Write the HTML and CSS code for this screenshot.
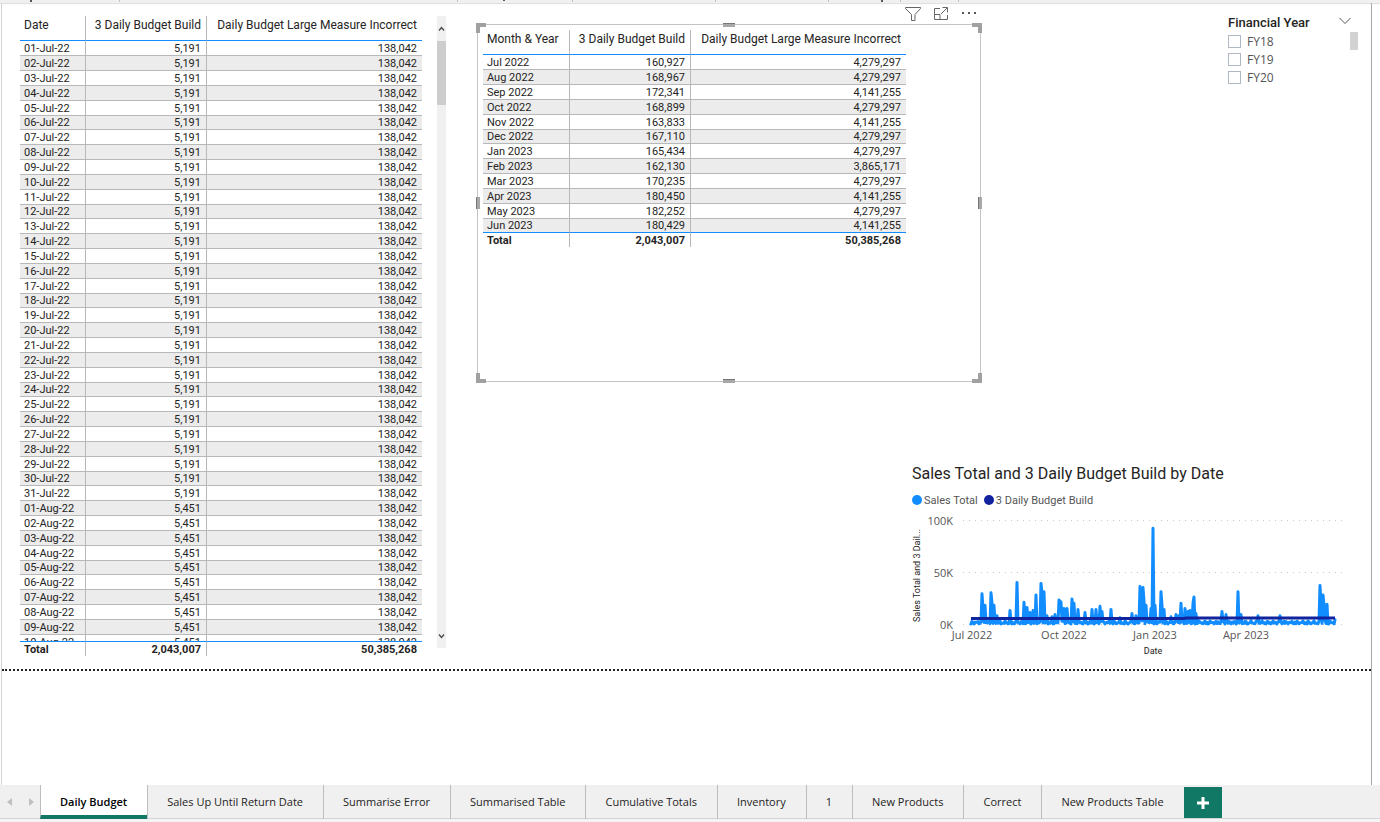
FILE: index.html
```html
<!DOCTYPE html>
<html lang="en">
<head>
	<meta charset="utf-8">
	<title>Daily Budget</title>
	<link rel="stylesheet" href="styles.css">
</head>
<body>
<div class="ribbon">
	<svg viewBox="0 0 1380 3" preserveAspectRatio="none">
		<path d="M119.5 0v2M457.5 0v2M572.5 0v2M715.5 0v2M828.5 0v2M900.5 0v2M958.5 0v2" stroke="#c4c4c4"/>
		<path d="M31 0v2M504 0v1M882 0v2" stroke="#555" stroke-width="2"/>
	</svg>
</div>

<main class="canvas">
	<div class="report">
		<section class="daily">
			<div>
				<div class="table-view">
					<table class="data" id="daily-table">
						<colgroup><col class="col-date"><col class="col-build"><col class="col-large"></colgroup>
						<thead>
							<tr><th>Date</th><th>3 Daily Budget Build</th><th>Daily Budget Large Measure Incorrect</th></tr>
						</thead>
						<tbody></tbody>
					</table>
				</div>
				<table class="data">
					<colgroup><col class="col-date"><col class="col-build"><col class="col-large"></colgroup>
					<tfoot>
						<tr><td>Total</td><td>2,043,007</td><td>50,385,268</td></tr>
					</tfoot>
				</table>
			</div>
			<div class="scrollbar">
				<svg width="9" height="25" viewBox="0 0 9 25"><path d="M2 14.5l2.5-3 2.5 3" fill="none" stroke="#444" stroke-width="1.2"/></svg>
				<div class="thumb"></div>
				<svg width="9" height="25" viewBox="0 0 9 25"><path d="M2 11.5l2.5 3 2.5-3" fill="none" stroke="#444" stroke-width="1.2"/></svg>
			</div>
		</section>

		<section class="right">
			<div class="top-row">
				<div class="monthly">
					<div class="visual-header">
						<button type="button" aria-label="Filters"><svg width="16" height="16" viewBox="0 0 16 16"><path d="M.5 1.5h15v1L10 8.500v6H6.500v-6L.5 2.500z" fill="none" stroke="#666"/></svg></button>
						<button type="button" aria-label="Focus mode"><svg width="16" height="16" viewBox="0 0 16 16"><path d="M7 2.500H1.500v11h13V9M1.500 8.500H7v5M8 8l6-6M9.500 1.500h5v5" fill="none" stroke="#666"/></svg></button>
						<button type="button" aria-label="More options"><svg width="16" height="16" viewBox="0 0 16 16"><path d="M1 6h2v2H1zM7 6h2v2H7zM13 6h2v2h-2z" fill="#555"/></svg></button>
					</div>
					<div class="selected">
						<i class="handle nw"></i><i class="handle ne"></i><i class="handle sw"></i><i class="handle se"></i>
						<i class="handle n"></i><i class="handle s"></i><i class="handle w"></i><i class="handle e"></i>
						<table class="data" id="monthly-table">
							<colgroup><col class="col-month"><col class="col-build"><col class="col-large"></colgroup>
							<thead>
								<tr><th>Month &amp; Year</th><th>3 Daily Budget Build</th><th>Daily Budget Large Measure Incorrect</th></tr>
							</thead>
							<tbody></tbody>
							<tfoot>
								<tr><td>Total</td><td>2,043,007</td><td>50,385,268</td></tr>
							</tfoot>
						</table>
					</div>
				</div>

				<div class="slicer">
					<div class="slicer-head">
						<span>Financial Year</span>
						<button type="button" aria-label="Expand"><svg width="12" height="8" viewBox="0 0 12 8"><path d="M.5 1L6 6.500 11.500 1" fill="none" stroke="#555"/></svg></button>
					</div>
					<div class="slicer-body">
						<div class="slicer-items">
							<label><input type="checkbox">FY18</label>
							<label><input type="checkbox">FY19</label>
							<label><input type="checkbox">FY20</label>
						</div>
						<div class="slicer-thumb"></div>
					</div>
				</div>
			</div>

			<div class="chart">
				<h2>Sales Total and 3 Daily Budget Build by Date</h2>
				<div class="legend">
					<span><i class="dot sales"></i>Sales Total</span>
					<span><i class="dot budget"></i>3 Daily Budget Build</span>
				</div>
				<svg class="plot" viewBox="0 0 430 144">
					<g class="grid"><path d="M51 8.500H430M51 60.500H430M51 112.500H430"/></g>
					<g class="axis" text-anchor="end">
						<text x="41" y="13">100K</text>
						<text x="41" y="65">50K</text>
						<text x="41" y="117">0K</text>
					</g>
					<path id="sales" class="line-sales"/>
					<path class="line-budget" d="M59 106.500H272L274 106H423"/>
					<g class="axis" text-anchor="middle">
						<text x="60" y="127">Jul 2022</text>
						<text x="152" y="127">Oct 2022</text>
						<text x="243" y="127">Jan 2023</text>
						<text x="334" y="127">Apr 2023</text>
					</g>
					<text class="axis-title" text-anchor="middle" x="241" y="142">Date</text>
					<text class="axis-title" transform="translate(8 110) rotate(-90)">Sales Total and 3 Dail...</text>
				</svg>
			</div>
		</section>
	</div>
</main>

<nav class="tabs">
	<div class="arrows">
		<button type="button" aria-label="Previous page"><svg width="6" height="8" viewBox="0 0 6 8"><path d="M5 0v8L0 4z" fill="#c0c0c0"/></svg></button>
		<button type="button" aria-label="Next page"><svg width="6" height="8" viewBox="0 0 6 8"><path d="M1 0v8l5-4z" fill="#c0c0c0"/></svg></button>
	</div>
	<a href="#" class="active">Daily Budget</a>
	<a href="#">Sales Up Until Return Date</a>
	<a href="#">Summarise Error</a>
	<a href="#">Summarised Table</a>
	<a href="#">Cumulative Totals</a>
	<a href="#">Inventory</a>
	<a href="#">1</a>
	<a href="#">New Products</a>
	<a href="#">Correct</a>
	<a href="#">New Products Table</a>
	<button type="button" class="add" aria-label="New page"><svg width="12" height="12" viewBox="0 0 12 12"><path d="M6 0v12M0 6h12" stroke="#fff" stroke-width="3"/></svg></button>
</nav>

<script src="script.js"></script>
</body>
</html>
```
FILE: styles.css
```css
* {
	box-sizing: border-box;
}
body {
	margin: 0;
	min-height: 100vh;
	display: flex;
	flex-direction: column;
	background: #fff;
	color: #252423;
	font-family: "Open Sans", "Noto Sans", sans-serif;
	font-size: 11px;
}
button {
	border: 0;
	padding: 0;
	background: none;
	display: flex;
	align-items: center;
	justify-content: center;
}
svg {
	display: block;
}

.ribbon {
	height: 3px;
	background: #f0f0f0;
	box-shadow: 0 1px 1px #ddd;
}
.ribbon svg {
	width: 100%;
	height: 3px;
}

/* report canvas */
.canvas {
	flex: 1;
	margin: 0 8px 0 1px;
	border-left: 1px solid #d4d4d4;
	border-right: 1px solid #a8a8a8;
}
.report {
	display: grid;
	grid-template-columns: 426fr 881fr;
	gap: 31px;
	padding: 3px 13px 13px 18px;
	border-bottom: 2px dotted #222;
}

/* tables */
.data {
	width: 402px;
	table-layout: fixed;
	border-collapse: separate;
	border-spacing: 0;
	font-family: Roboto, sans-serif;
}
#monthly-table {
	width: 423px;
}
.col-date { width: 66px; }
.col-month { width: 87px; }
.col-build { width: 121px; }
.col-large { width: 215px; }
.data th, .data td {
	padding: 0 5px 0 4px;
	border-right: 1px solid #b8b8b8;
	text-align: right;
	white-space: nowrap;
	line-height: 13px;
}
.data th:first-child, .data td:first-child {
	text-align: left;
}
.data th:last-child, .data td:last-child {
	border-right: 0;
}
.data th {
	height: 25px;
	padding-bottom: 6px;
	border-bottom: 1px solid #118dff;
	font: 12px/18px Roboto, sans-serif;
}
.data tbody td {
	height: 15px;
	border-bottom: 1px solid #b8b8b8;
}
.data tbody tr:nth-child(6n) td {
	height: 14px;
}
.data tbody tr:nth-child(even) {
	background: #ececec;
}
.data tfoot td {
	height: 15px;
	border-top: 1px solid #118dff;
	background: #fff;
	font-weight: bold;
}

.daily {
	display: flex;
	justify-content: space-between;
	margin-top: 10px;
}
/* the last visible day is cut by the total row */
.table-view {
	height: 625px;
	overflow: hidden;
}
.scrollbar {
	display: flex;
	flex-direction: column;
	width: 9px;
	margin-bottom: 8px;
	background: #f0f0f0;
}
.scrollbar .thumb {
	height: 64px;
	margin-bottom: auto;
	background: #cdcdcd;
}

.right {
	display: flex;
	flex-direction: column;
	justify-content: space-between;
}
.top-row {
	display: flex;
	justify-content: space-between;
}
.monthly {
	width: 504px;
}
.visual-header {
	display: flex;
	justify-content: flex-end;
	gap: 12px;
	height: 18px;
	padding-right: 4px;
}
.visual-header button {
	width: 16px;
	height: 16px;
}
.selected {
	position: relative;
	height: 358px;
	padding: 5px;
	border: 1px solid #c4c4c4;
}
#monthly-table tbody tr:last-child td {
	height: 13px;
	border-bottom: 0;
}

/* resize handles sit over the border */
.handle {
	position: absolute;
	width: 10px;
	height: 10px;
	border: 0 solid #a0a0a0;
}
.nw { left: -2px; top: -2px; border-width: 4px 0 0 4px; }
.ne { right: -2px; top: -2px; border-width: 4px 4px 0 0; }
.sw { left: -2px; bottom: -2px; border-width: 0 0 4px 4px; }
.se { right: -2px; bottom: -2px; border-width: 0 4px 4px 0; }
.n, .s {
	left: 50%;
	width: 12px;
	height: 4px;
	margin-left: -6px;
	border-top: 1px solid #777;
	background: #a8a8a8;
}
.w, .e {
	top: 50%;
	width: 4px;
	height: 12px;
	margin-top: -6px;
	border-left: 1px solid #777;
	background: #a8a8a8;
}
.n { top: -2px; }
.s { bottom: -2px; }
.w { left: -2px; }
.e { right: -2px; }

/* slicer */
.slicer {
	width: 130px;
	padding-top: 8px;
}
.slicer-head {
	display: flex;
	justify-content: space-between;
	height: 18px;
	padding-right: 7px;
	font: 500 13px/18px Roboto, sans-serif;
}
.slicer-head button {
	height: 14px;
}
.slicer-body {
	display: flex;
	justify-content: space-between;
}
.slicer label {
	display: flex;
	align-items: center;
	gap: 6px;
	height: 18px;
	color: #555;
	font-size: 12px;
}
.slicer input {
	appearance: none;
	width: 13px;
	height: 13px;
	margin: 0;
	border: 1px solid #b0b8c4;
	background: #fff;
}
.slicer-thumb {
	width: 8px;
	height: 18px;
	background: #d2d2d2;
}

/* line chart */
.chart {
	align-self: flex-end;
	width: 430px;
	margin-right: 16px;
}
.chart h2 {
	margin: 0 0 8px;
	font: 16px/20px Roboto, sans-serif;
}
.legend {
	display: flex;
	gap: 6px;
	height: 20px;
	color: #555;
	font-family: Roboto, sans-serif;
}
.legend span {
	display: flex;
	align-items: center;
	height: 16px;
	gap: 2px;
}
.dot {
	width: 10px;
	height: 10px;
	border-radius: 50%;
}
.sales { background: #118dff; }
.budget { background: #12239e; }
.plot {
	width: 100%;
}
.grid path {
	stroke: #c8c8c8;
	stroke-dasharray: 1 5;
}
.axis {
	fill: #555;
	font-size: 11px;
}
.axis-title {
	fill: #252423;
	font: 9px Roboto, sans-serif;
}
.line-sales {
	fill: none;
	stroke: #118dff;
	stroke-width: 3;
	stroke-linejoin: round;
	stroke-linecap: round;
}
.line-budget {
	fill: none;
	stroke: #12239e;
	stroke-width: 3;
}

/* page tabs */
.tabs {
	display: flex;
	height: 37px;
	padding-left: 2px;
	border-bottom: 3px solid #f4f4f4;
	background: #f0f0f0;
	box-shadow: inset 0 -1px #d4d4d4;
}
.arrows {
	display: flex;
	justify-content: space-between;
	width: 38px;
	padding: 0 6px 0 5px;
}
.tabs a {
	padding: 0 20px 0 19px;
	border-left: 1px solid #bdbdbd;
	color: #252423;
	line-height: 34px;
	text-decoration: none;
	white-space: nowrap;
}
.tabs .active {
	border-bottom: 4px solid #117865;
	background: #fff;
	color: #000;
	font-weight: 600;
}
.add {
	width: 38px;
	height: 31px;
	margin-top: 2px;
	background: #117865;
}
```
FILE: script.js
```js
var months = [
	["Jul 2022", "160,927", "4,279,297"],
	["Aug 2022", "168,967", "4,279,297"],
	["Sep 2022", "172,341", "4,141,255"],
	["Oct 2022", "168,899", "4,279,297"],
	["Nov 2022", "163,833", "4,141,255"],
	["Dec 2022", "167,110", "4,279,297"],
	["Jan 2023", "165,434", "4,279,297"],
	["Feb 2023", "162,130", "3,865,171"],
	["Mar 2023", "170,235", "4,279,297"],
	["Apr 2023", "180,450", "4,141,255"],
	["May 2023", "182,252", "4,279,297"],
	["Jun 2023", "180,429", "4,141,255"]
];

function fill(id, rows) {
	var html = "";
	rows.forEach(function(r) {
		html += "<tr><td>" + r.join("</td><td>") + "</td></tr>";
	});
	document.querySelector("#" + id + " tbody").innerHTML = html;
}

function pad(n) {
	return n < 10 ? "0" + n : n;
}

var days = [];
for (var d = 1; d <= 31; d++)
	days.push([pad(d) + "-Jul-22", "5,191", "138,042"]);
for (d = 1; d <= 10; d++)
	days.push([pad(d) + "-Aug-22", "5,451", "138,042"]);

fill("daily-table", days);
fill("monthly-table", months);

// day of the financial year -> sales in thousands
var peaks = {
	11: 29, 12: 14, 14: 18, 20: 30, 21: 20, 23: 18, 26: 8, 39: 13, 46: 40, 53: 21, 56: 16, 59: 11,
	62: 13, 65: 28, 70: 39, 71: 30, 73: 31, 76: 8, 81: 7, 84: 9, 88: 23, 89: 22, 90: 21, 93: 15,
	96: 15, 101: 24, 103: 20, 107: 14, 114: 11, 121: 14, 125: 14, 129: 17, 131: 12,
	140: 14, 149: 6, 161: 10, 165: 8, 169: 36, 170: 20, 172: 35, 173: 22, 175: 18, 180: 15, 182: 92,
	184: 18, 190: 31, 191: 18, 193: 14, 200: 7, 205: 9, 208: 8, 210: 20, 214: 15, 217: 12,
	219: 13, 222: 20, 223: 26, 225: 10, 251: 12, 255: 9, 267: 31, 270: 9, 287: 8,
	309: 8, 349: 37, 350: 20, 352: 28, 353: 18, 356: 19, 364: 4
};

var path = "";
for (var i = 0; i <= 364; i++) {
	var v = peaks[i] || Math.abs(Math.sin(i * 1.7) + Math.sin(i * 0.6)) * 1.6;
	path += (i ? "L" : "M") + (59 + i) + " " + (112 - v * 1.04).toFixed(1);
}
document.getElementById("sales").setAttribute("d", path);
```
